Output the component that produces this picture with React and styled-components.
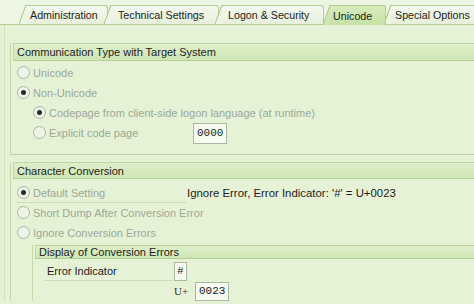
import React from "react";
import styled, { createGlobalStyle } from "styled-components";

const Global = createGlobalStyle`
  html, body {
    margin: 0;
    padding: 0;
    overflow: hidden;
    background: #e6f2d6;
  }
  body {
    font-family: "Liberation Sans", Arial, sans-serif;
    font-size: 11px;
    color: #1c1c1c;
  }
`;

const Page = styled.div`
  width: 474px;
  height: 304px;
  overflow: hidden;
  background: #e6f2d6;
`;

const TabStrip = styled.div`
  display: flex;
  align-items: flex-end;
  height: 24px;
  padding-left: 26px;
  border-bottom: 1px solid #b3cd95;
  background: #edf5e3;
`;

const Tab = styled.div`
  position: relative;
  flex: none;
  box-sizing: border-box;
  width: ${(p) => p.$w}px;
  margin-left: ${(p) => p.$gap}px;
  padding-left: ${(p) => p.$pl}px;
  display: flex;
  align-items: center;
  white-space: nowrap;
  font-size: 10.7px;
  color: #1c1c1c;
  background: ${(p) =>
    p.$active
      ? "linear-gradient(#d6ecbb, #c6e2a6)"
      : "linear-gradient(#f4f9ee, #e6f0da)"};
  border-top: 1px solid #b3cd95;
  border-right: 1px solid #b3cd95;
  border-radius: 0 3px 0 0;
  margin-bottom: ${(p) => (p.$active ? "-1px" : "0")};
  height: ${(p) => (p.$active ? "20px" : "19px")};
  z-index: ${(p) => (p.$active ? 9 : p.$z)};

  &::before {
    content: "";
    position: absolute;
    left: -7px;
    top: -1px;
    bottom: 0;
    width: 7px;
    background: linear-gradient(
      to bottom right,
      transparent calc(50% - 0.8px),
      #b3cd95 calc(50% - 0.3px),
      #b3cd95 calc(50% + 0.3px),
      ${(p) => (p.$active ? "#cfe7b2" : "#eef5e4")} calc(50% + 0.8px)
    );
  }
`;

const Panel = styled.div`
  margin-left: 4px;
  border-left: 1px solid #cfe2bb;
  padding: 18px 0 0 5px;
  display: flex;
  flex-direction: column;
  gap: 7px;
`;

const Group = styled.div`
  width: 520px;
  border-left: 1px solid #c3d9ab;
  border-bottom: ${(p) => (p.$open ? "none" : "1px solid #bcd4a2")};
  padding-bottom: ${(p) => (p.$open ? 0 : 11)}px;
`;

const GroupHeader = styled.div`
  height: ${(p) => p.$h || 16}px;
  margin-left: 2px;
  padding-left: 3px;
  display: flex;
  align-items: center;
  font-size: 11px;
  color: #1c1c1c;
  background: linear-gradient(#deefcb, #cfe6b4);
  border-top: 1px solid #bcd4a2;
  border-bottom: 1px solid #b3cd95;
  border-left: 1px solid #c3d9ab;
`;

const Body = styled.div`
  display: flex;
  flex-direction: column;
  padding-top: ${(p) => p.$pt || 2}px;
  padding-left: 6px;
`;

const Row = styled.div`
  height: 20px;
  display: flex;
  align-items: center;
  padding-left: ${(p) => p.$indent || 0}px;
`;

const RadioLabel = styled.label`
  display: flex;
  align-items: center;
  flex: none;
  width: ${(p) => (p.$w ? p.$w + "px" : "auto")};
  height: 19px;
  color: #9ba796;
  border-bottom: ${(p) => (p.$line ? "1px solid #c9dcb5" : "1px solid transparent")};
`;

const Circle = styled.span`
  width: 11px;
  height: 11px;
  border-radius: 50%;
  border: 1px solid #a9b6a3;
  background: #eef4e6;
  margin-right: 3px;
  display: flex;
  align-items: center;
  justify-content: center;

  &::after {
    content: "";
    width: 5px;
    height: 5px;
    border-radius: 50%;
    background: ${(p) => (p.$on ? "#2a2a2a" : "transparent")};
  }
`;

const Field = styled.span`
  font-family: "Liberation Mono", monospace;
  font-size: 11px;
  color: #222;
  background: #f6faf0;
  border: 1px solid #a9b8a0;
  height: ${(p) => p.$h || 17}px;
  padding: 0 ${(p) => (p.$narrow ? 2 : 3)}px;
  display: flex;
  align-items: center;
  margin-left: ${(p) => p.$ml || 0}px;
`;

const Info = styled.span`
  margin-left: 1px;
  font-size: 11.4px;
  color: #1c1c1c;
`;

const Inner = styled.div`
  margin: 2px 0 0 21px;
  border-left: 1px solid #c3d9ab;
`;

const Label = styled.span`
  flex: none;
  width: 125px;
  height: 19px;
  padding-left: 3px;
  display: flex;
  align-items: center;
  font-size: 11px;
  color: #1c1c1c;
  border-bottom: 1px solid #c9dcb5;
`;

const Prefix = styled.span`
  font-family: "Liberation Serif", serif;
  font-size: 11px;
  color: #333;
  margin-left: 135px;
  width: 18px;
`;

function Radio({ on, children, w, line }) {
  return (
    <RadioLabel $w={w} $line={line}>
      <Circle $on={on} />
      {children}
    </RadioLabel>
  );
}

const tabs = [
  { t: "Administration", w: 82, gap: 0, pl: 4 },
  { t: "Technical Settings", w: 108, gap: 3, pl: 7 },
  { t: "Logon & Security", w: 102, gap: 3, pl: 6 },
  { t: "Unicode", w: 56, gap: 6, pl: 3, active: true },
  { t: "Special Options", w: 90, gap: 5, pl: 4 },
];

export default function App() {
  return (
    <Page>
      <Global />
      <TabStrip>
        {tabs.map((tab, i) => (
          <Tab
            key={tab.t}
            $active={tab.active}
            $w={tab.w}
            $gap={tab.gap}
            $pl={tab.pl}
            $z={i + 1}
          >
            {tab.t}
          </Tab>
        ))}
      </TabStrip>
      <Panel>
        <Group>
          <GroupHeader>Communication Type with Target System</GroupHeader>
          <Body>
            <Row>
              <Radio>Unicode</Radio>
            </Row>
            <Row>
              <Radio on>Non-Unicode</Radio>
            </Row>
            <Row $indent={16}>
              <Radio on>Codepage from client-side logon language (at runtime)</Radio>
            </Row>
            <Row $indent={16}>
              <Radio w={160}>Explicit code page</Radio>
              <Field $h={19}>0000</Field>
            </Row>
          </Body>
        </Group>
        <Group $open>
          <GroupHeader $h={15}>Character Conversion</GroupHeader>
          <Body $pt={4}>
            <Row>
              <Radio on w={169} line>
                Default Setting
              </Radio>
              <Info>Ignore Error, Error Indicator: '#' = U+0023</Info>
            </Row>
            <Row>
              <Radio>Short Dump After Conversion Error</Radio>
            </Row>
            <Row>
              <Radio>Ignore Conversion Errors</Radio>
            </Row>
          </Body>
          <Inner>
            <GroupHeader $h={12}>Display of Conversion Errors</GroupHeader>
            <Body>
              <Row $indent={5}>
                <Label>Error Indicator</Label>
                <Field $ml={2} $narrow>
                  #
                </Field>
              </Row>
              <Row>
                <Prefix>U+</Prefix>
                <Field $ml={3}>0023</Field>
              </Row>
            </Body>
          </Inner>
        </Group>
      </Panel>
    </Page>
  );
}
